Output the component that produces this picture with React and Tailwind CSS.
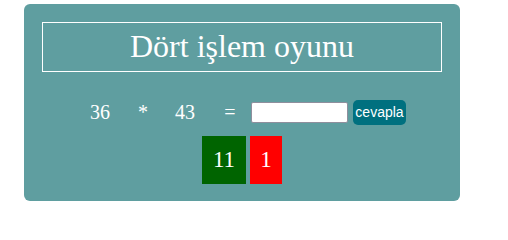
import React, { useState } from "react";

const App = () => {
  const [answer, setAnswer] = useState("");
  const dogru = 11;
  const yanlis = 1;

  return (
    <div className="pt-1 pl-6">
      <div className="w-[436px] h-[197px] bg-[#5f9ea0] rounded-md pt-[18px] px-[18px]">
        <div className="border border-white h-[50px] flex items-center justify-center">
          <h1 className="text-white text-[32px] leading-none font-['Liberation_Serif',serif] -mt-[2px]">
            Dört işlem oyunu
          </h1>
        </div>
        <div className="flex items-center h-[26px] mt-[27px] text-white text-[20px] font-['Liberation_Serif',serif]">
          <span className="w-[20px] ml-[48px] text-center">36</span>
          <span className="w-[20px] ml-[23px] text-center">*</span>
          <span className="w-[20px] ml-[22px] text-center">43</span>
          <span className="w-[20px] ml-[25px] text-center">=</span>
          <input
            value={answer}
            onChange={(e) => setAnswer(e.target.value)}
            className="ml-[11px] w-[97px] h-[21px] bg-white border border-[#8f8f9d] rounded-[2px] outline-none text-black text-sm px-1"
          />
          <button className="ml-[5px] w-[53px] h-[25px] bg-[#00707f] rounded-[5px] text-white text-[14px] font-['Liberation_Sans',sans-serif]">
            cevapla
          </button>
        </div>
        <div className="flex justify-center gap-[4px] mt-[11px] text-white text-[23px] font-['Liberation_Serif',serif]">
          <div className="w-[44px] h-[48px] bg-[#006400] flex items-center justify-center">
            {dogru}
          </div>
          <div className="w-[32px] h-[48px] bg-[#ff0000] flex items-center justify-center">
            {yanlis}
          </div>
        </div>
      </div>
    </div>
  );
};

export default App;
